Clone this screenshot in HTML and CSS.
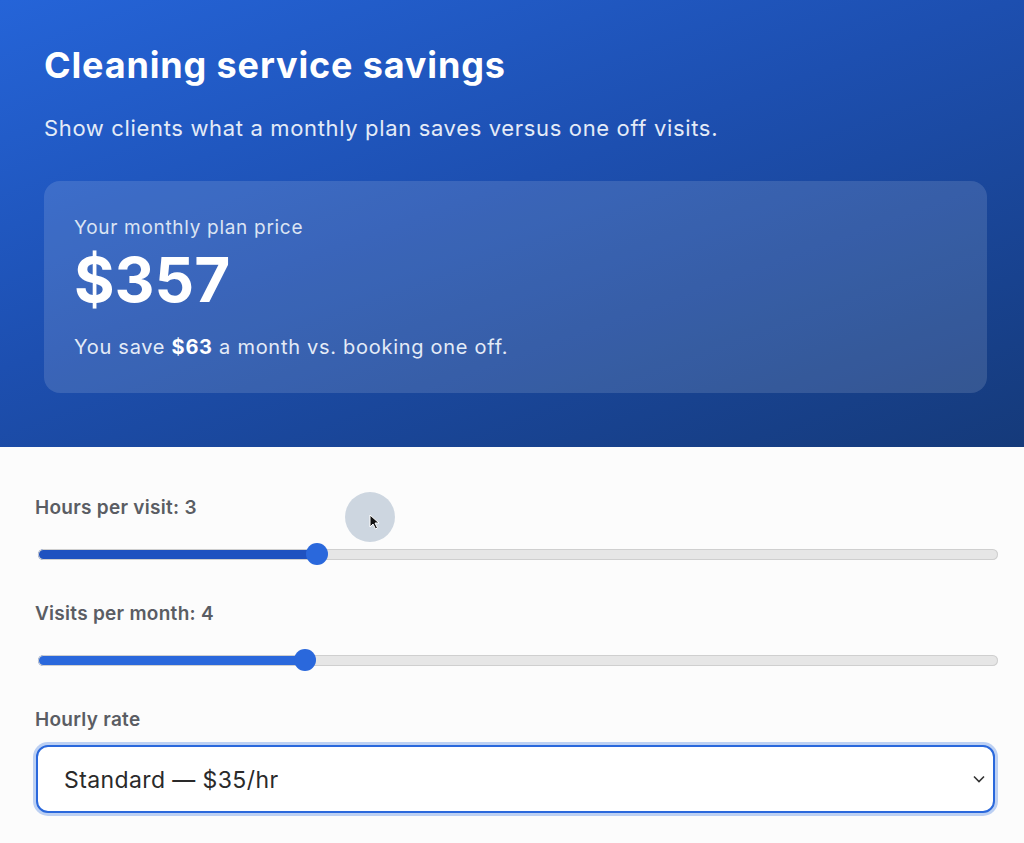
FILE: index.html
```html
<!DOCTYPE html>
<html>
  <head>
    <title>Cleaning service savings</title>
    <meta charset="utf-8" />
    <link rel="stylesheet" href="styles.css">
  </head>
  <body>
    <div class="hero">
      <h1>Cleaning service savings</h1>
      <p class="lead">Show clients what a monthly plan saves versus one off visits.</p>
      <div class="result">
        <div class="result-label">Your monthly plan price</div>
        <div class="result-price">$357</div>
        <div class="result-note">You save <b>$63</b> a month vs. booking one off.</div>
      </div>
    </div>

    <form class="controls">
      <label class="field">
        <span class="field-label">Hours per visit: 3</span>
        <input class="range range-hover" type="range" min="1" max="8" value="3" style="--p: 29%" />
      </label>
      <label class="field">
        <span class="field-label">Visits per month: 4</span>
        <input class="range" type="range" min="1" max="12" value="4" style="--p: 27%" />
      </label>
      <label class="field">
        <span class="field-label">Hourly rate</span>
        <select class="rate">
          <option>Basic — $30/hr</option>
          <option selected>Standard — $35/hr</option>
          <option>Deep clean — $45/hr</option>
        </select>
      </label>
    </form>

    <div class="cursor">
      <svg width="12" height="16" viewBox="0 0 12 16">
        <path d="M1 1 L1 13 L4 10 L6.5 15 L8.5 14 L6 9 L10 9 Z" fill="#111" stroke="#fff" stroke-width="1"/>
      </svg>
    </div>
  </body>
</html>
```

FILE: styles.css
```css
body {
  margin: 0;
  background: #fcfcfc;
  font-family: Inter, "Noto Sans", sans-serif;
  color: #222;
}
.hero {
  background: linear-gradient(160deg, #2564d8 0%, #1d4fb0 45%, #153a7a 100%);
  padding: 43px 37px 54px 44px;
  color: #fff;
}
.hero h1 {
  margin: 0;
  font-size: 36px;
  font-weight: 700;
  letter-spacing: 0.85px;
}
.lead {
  margin: 28px 0 0;
  font-size: 22px;
  letter-spacing: 0.65px;
  color: #e4ebf7;
}
.result {
  margin-top: 40px;
  background: rgba(255, 255, 255, 0.13);
  border-radius: 16px;
  padding: 35px 30px 34px;
}
.result-label {
  font-size: 19px;
  letter-spacing: 0.7px;
  color: #dbe4f3;
}
.result-price {
  font-size: 62px;
  font-weight: 700;
  line-height: 1;
  margin-top: 10px;
}
.result-note {
  margin-top: 24px;
  font-size: 20px;
  letter-spacing: 0.72px;
  color: #e4ebf7;
}
.result-note b {
  color: #fff;
}

.controls {
  padding: 49px 28px 28px 35px;
  display: flex;
  flex-direction: column;
  gap: 37px;
}
.field {
  display: flex;
  flex-direction: column;
  gap: 14px;
}
.field-label {
  font-size: 19px;
  font-weight: 600;
  letter-spacing: 0.28px;
  color: #5a5d63;
}
.range {
  -webkit-appearance: none;
  appearance: none;
  margin: 10px 0 0 3px;
  width: 960px;
  height: 22px;
  background: transparent;
  --c: #2a68dc;
}
.range-hover {
  --c: #1f52c0;
}
.range::-webkit-slider-runnable-track {
  height: 11px;
  border-radius: 6px;
  background: linear-gradient(to right, var(--c) var(--p), #e6e6e6 var(--p));
  box-shadow: inset 0 0 0 1px #cfcfcf;
}
.range::-webkit-slider-thumb {
  -webkit-appearance: none;
  width: 22px;
  height: 22px;
  margin-top: -5.5px;
  border-radius: 50%;
  background: #2a68dc;
  border: none;
}
.rate {
  -webkit-appearance: none;
  appearance: none;
  width: 959px;
  height: 68px;
  margin: 0 0 0 1px;
  padding: 2px 26px 0;
  font-family: Inter, "Noto Sans", sans-serif;
  font-size: 23px;
  letter-spacing: 0.4px;
  color: #2a2a2a;
  background: #fff url("data:image/svg+xml;utf8,<svg xmlns='http://www.w3.org/2000/svg' width='12' height='8' viewBox='0 0 12 8'><path d='M1 1.5 L6 6.5 L11 1.5' fill='none' stroke='%23333' stroke-width='1.6'/></svg>") no-repeat right 8px center;
  border: 2px solid #2a68dc;
  border-radius: 12px;
  box-shadow: 0 0 0 3px #bcd0f3;
  outline: none;
}

.cursor {
  position: absolute;
  left: 345px;
  top: 492px;
  width: 50px;
  height: 50px;
  border-radius: 50%;
  background: rgba(190, 202, 215, 0.75);
}
.cursor svg {
  position: absolute;
  left: 24px;
  top: 22px;
}
```
